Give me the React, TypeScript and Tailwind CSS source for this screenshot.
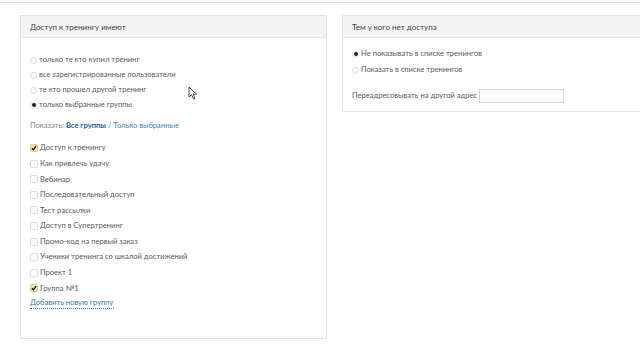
import React from "react";

const groups = [
  { name: "Доступ к тренингу", on: true },
  { name: "Как привлечь удачу", on: false },
  { name: "Вебинар", on: false },
  { name: "Последовательный доступ", on: false },
  { name: "Тест рассылки", on: false },
  { name: "Доступ в Супертренинг", on: false },
  { name: "Промо-код на первый заказ", on: false },
  { name: "Ученики тренинга со шкалой достижений", on: false },
  { name: "Проект 1", on: false },
  { name: "Группа №1", on: true },
];

const Radio = ({ on }: { on?: boolean }) => (
  <span className="w-[7px] h-[7px] rounded-full border border-[#d9d9d9] bg-white flex items-center justify-center shrink-0">
    {on && <span className="w-[4px] h-[4px] rounded-full bg-[#222]" />}
  </span>
);

const Check = ({ on }: { on?: boolean }) => (
  <span
    className={
      "w-[8px] h-[8px] rounded-[2px] border flex items-center justify-center shrink-0 " +
      (on ? "border-[#e2c98f] bg-[#f3e2b8]" : "border-[#dcdcdc] bg-white")
    }
  >
    {on && (
      <svg width="6" height="6" viewBox="0 0 10 10">
        <path d="M1.5 5.5 L4 8 L8.5 2" fill="none" stroke="#111" strokeWidth="2.2" />
      </svg>
    )}
  </span>
);

const Panel = ({ title, children, className }: { title: string; children: React.ReactNode; className?: string }) => (
  <div className={"border border-[#e4e4e4] bg-white " + (className ?? "")}>
    <div className="h-[22px] bg-[#f3f3f3] border-b border-[#e6e6e6] px-[9px] flex items-center text-[8px] text-[#444]">
      {title}
    </div>
    {children}
  </div>
);

export default function App() {
  return (
    <div
      className="relative w-[640px] h-[360px] bg-white overflow-hidden text-[7.6px] text-[#5a5a5a]"
      style={{ fontFamily: "Lato, 'Open Sans', sans-serif" }}
    >
      <div className="h-[3px] border-b border-[#e3e3e3]" />
      <div className="flex items-start gap-[15px] pl-[20px] pt-[12px]">
        {/* Left panel */}
        <Panel title="Доступ к тренингу имеют" className="w-[307px] h-[324px]">
          <div className="px-[9px] pt-[17px]">
            <div className="flex flex-col gap-[5px]">
              {[
                "только те кто купил тренинг",
                "все зарегистрированные пользователи",
                "те кто прошел другой тренинг",
                "только выбранные группы",
              ].map((t, i) => (
                <div key={t} className="h-[10px] flex items-center gap-[2px]">
                  <Radio on={i === 3} />
                  <span>{t}</span>
                </div>
              ))}
            </div>
            <div className="mt-[11px] h-[10px] flex items-center text-[#888]">
              Показать:&nbsp;
              <span className="font-bold text-[#1e5a96]">Все группы</span>
              <span className="text-[#4a7fb8]">&nbsp;/ Только выбранные</span>
            </div>
            <div className="mt-[12px] flex flex-col gap-[5.6px]">
              {groups.map((g) => (
                <div key={g.name} className="h-[10px] flex items-center gap-[2px]">
                  <Check on={g.on} />
                  <span>{g.name}</span>
                </div>
              ))}
            </div>
            <div className="mt-[4px]">
              <span className="text-[#3b73ad] border-b border-dotted border-[#3b73ad] leading-[11px] inline-block">
                Добавить новую группу
              </span>
            </div>
          </div>
        </Panel>

        {/* Right panel */}
        <Panel title="Тем у кого нет доступа" className="flex-1 h-[97px] border-r-0">
          <div className="px-[9px] pt-[11px]">
            <div className="flex flex-col gap-[6px]">
              <div className="h-[10px] flex items-center gap-[2px]">
                <Radio on />
                <span>Не показывать в списке тренингов</span>
              </div>
              <div className="h-[10px] flex items-center gap-[2px]">
                <Radio />
                <span>Показать в списке тренингов</span>
              </div>
            </div>
            <div className="mt-[14px] flex items-center gap-[2px]">
              <span>Переадресовывать на другой адрес</span>
              <input className="w-[85px] h-[14px] border border-[#d2d2d2] bg-white outline-none" />
            </div>
          </div>
        </Panel>
      </div>

      {/* mouse cursor */}
      <svg className="absolute left-[188px] top-[86px]" width="10" height="14" viewBox="0 0 10 14">
        <path d="M1 1 L1 11 L3.5 8.8 L5.5 13 L7 12.3 L5.1 8.2 L8.5 8.2 Z" fill="#fff" stroke="#333" strokeWidth="0.9" />
      </svg>
    </div>
  );
}
